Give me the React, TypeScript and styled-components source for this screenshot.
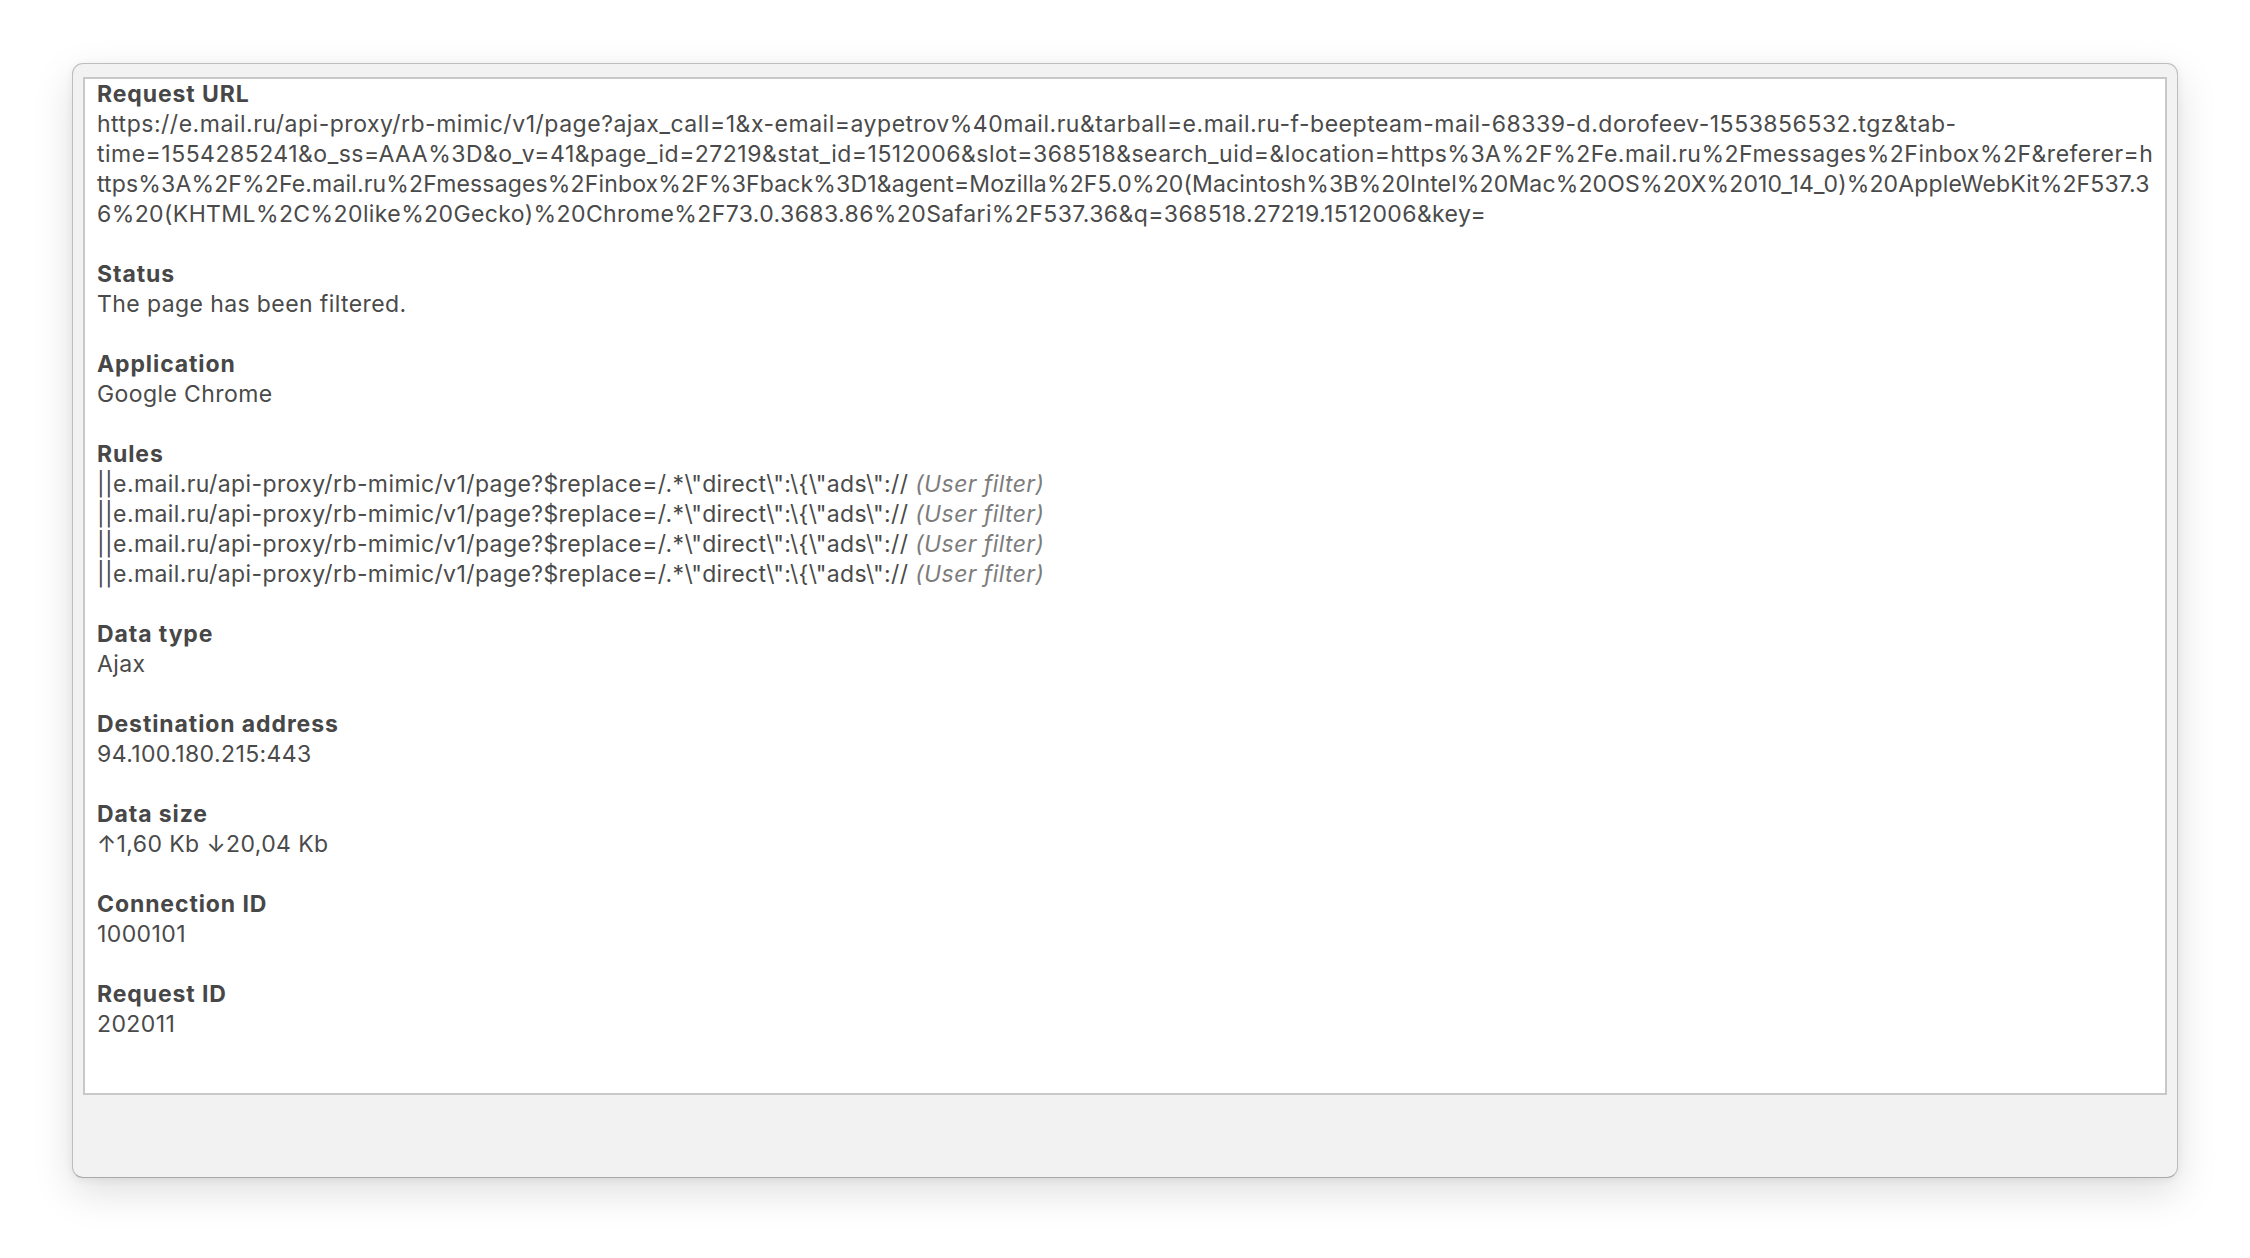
import React from "react";
import styled, { createGlobalStyle } from "styled-components";

const GlobalStyle = createGlobalStyle`
  html, body {
    margin: 0;
    padding: 0;
    background: #ffffff;
  }
  body {
    font-family: Inter, "Noto Sans", "Liberation Sans", sans-serif;
    -webkit-font-smoothing: antialiased;
  }
`;

const Page = styled.div`
  padding: 63px 0 0 72px;
  width: 2250px;
  height: 1258px;
  box-sizing: border-box;
`;

const Window = styled.div`
  width: 2106px;
  height: 1115px;
  box-sizing: border-box;
  display: flex;
  flex-direction: column;
  background: #f2f2f2;
  border: 1px solid #bdbdbd;
  border-bottom-color: #a9a9a9;
  border-radius: 11px;
  padding: 13px 10px 82px 10px;
  box-shadow: 0 14px 40px rgba(0, 0, 0, 0.13), 0 2px 8px rgba(0, 0, 0, 0.06);
`;

const DetailsBox = styled.div`
  flex: 1;
  background: #ffffff;
  border: 2px solid #c8c8c8;
  padding: 0 10px 0 12px;
  overflow: hidden;
  color: #4a4a4a;
  font-size: 23px;
  line-height: 30px;
  letter-spacing: 0.4px;
`;

const Section = styled.section`
  margin-bottom: 30px;
`;

const Title = styled.div`
  font-weight: 700;
  color: #474747;
  letter-spacing: 0.9px;
`;

const Line = styled.div<{ $tracking?: number }>`
  white-space: nowrap;
  letter-spacing: ${(p) => (p.$tracking ?? 0.4)}px;
`;

const Note = styled.span`
  font-style: italic;
  color: #7c7c7c;
`;

type LineData = { content: React.ReactNode; tracking?: number };
type Item = { title: string; lines: LineData[] };

const RULE = '||e.mail.ru/api-proxy/rb-mimic/v1/page?$replace=/.*\\"direct\\":\\{\\"ads\\"://';

const ITEMS: Item[] = [
  {
    title: "Request URL",
    lines: [
      {
        content:
          "https://e.mail.ru/api-proxy/rb-mimic/v1/page?ajax_call=1&x-email=aypetrov%40mail.ru&tarball=e.mail.ru-f-beepteam-mail-68339-d.dorofeev-1553856532.tgz&tab-",
        tracking: 0.52,
      },
      {
        content:
          "time=1554285241&o_ss=AAA%3D&o_v=41&page_id=27219&stat_id=1512006&slot=368518&search_uid=&location=https%3A%2F%2Fe.mail.ru%2Fmessages%2Finbox%2F&referer=h",
        tracking: 0.49,
      },
      {
        content:
          "ttps%3A%2F%2Fe.mail.ru%2Fmessages%2Finbox%2F%3Fback%3D1&agent=Mozilla%2F5.0%20(Macintosh%3B%20Intel%20Mac%20OS%20X%2010_14_0)%20AppleWebKit%2F537.3",
        tracking: 0.15,
      },
      {
        content:
          "6%20(KHTML%2C%20like%20Gecko)%20Chrome%2F73.0.3683.86%20Safari%2F537.36&q=368518.27219.1512006&key=",
      },
    ],
  },
  { title: "Status", lines: [{ content: "The page has been filtered." }] },
  { title: "Application", lines: [{ content: "Google Chrome" }] },
  {
    title: "Rules",
    lines: [0, 1, 2, 3].map((i) => ({
      content: (
        <React.Fragment key={i}>
          {RULE} <Note>(User filter)</Note>
        </React.Fragment>
      ),
    })),
  },
  { title: "Data type", lines: [{ content: "Ajax" }] },
  { title: "Destination address", lines: [{ content: "94.100.180.215:443" }] },
  { title: "Data size", lines: [{ content: "\u21911,60 Kb \u219320,04 Kb" }] },
  { title: "Connection ID", lines: [{ content: "1000101" }] },
  { title: "Request ID", lines: [{ content: "202011" }] },
];

export default function App() {
  return (
    <>
      <GlobalStyle />
      <Page>
        <Window>
          <DetailsBox>
            {ITEMS.map((item) => (
              <Section key={item.title}>
                <Title>{item.title}</Title>
                {item.lines.map((line, i) => (
                  <Line key={i} $tracking={line.tracking}>
                    {line.content}
                  </Line>
                ))}
              </Section>
            ))}
          </DetailsBox>
        </Window>
      </Page>
    </>
  );
}
